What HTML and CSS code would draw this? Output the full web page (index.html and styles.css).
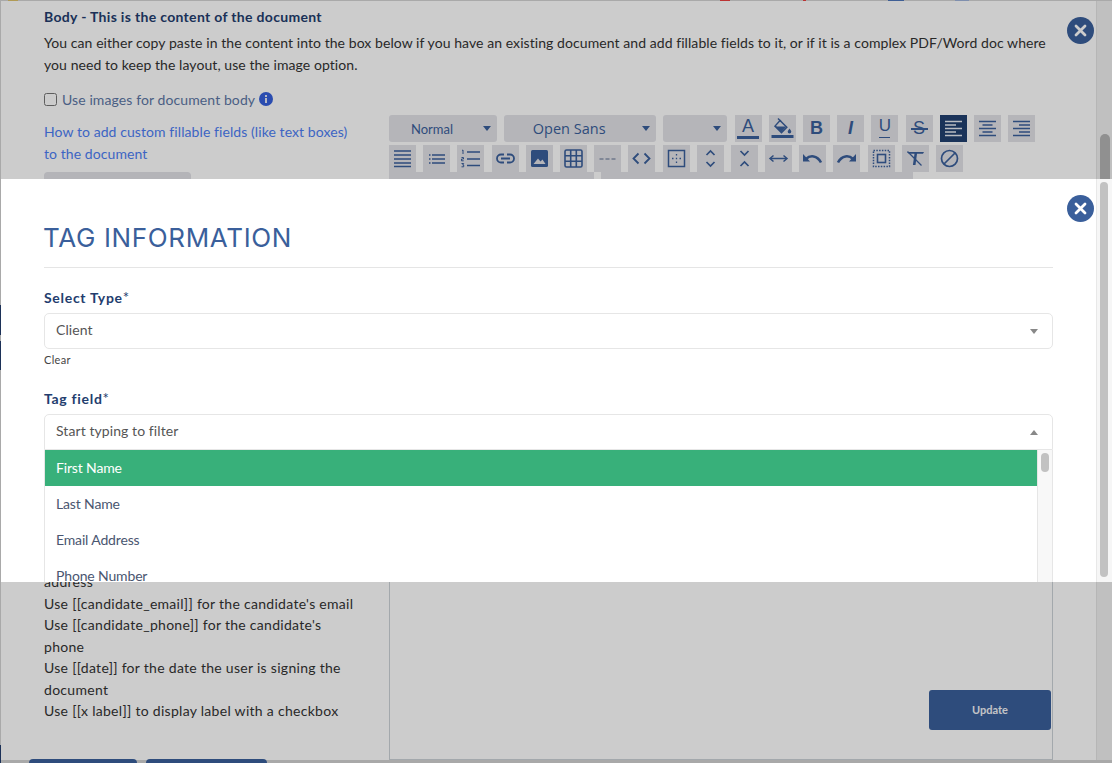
FILE: index.html
```html
<!DOCTYPE html>
<html lang="en">
<head>
<meta charset="utf-8">
<title>Tag information</title>
<link rel="stylesheet" href="styles.css">
</head>
<body>
<div class="page">
  <div class="edge-top"><i class="frag f-a"></i><i class="frag f-b"></i><i class="frag f-c"></i><i class="frag f-d"></i><i class="frag f-e"></i></div>
  <div class="edge-left"><i class="seg s-a"></i><i class="seg s-b"></i><i class="seg s-c"></i></div>

  <section class="doc">
    <div class="doc-main">
      <h3 class="doc-title">Body - This is the content of the document</h3>
      <p class="doc-desc">You can either copy paste in the content into the box below if you have an existing document and add fillable fields to it, or if it is a complex PDF/Word doc where you need to keep the layout, use the image option.</p>
      <label class="use-images"><input type="checkbox" class="check"><span>Use images for document body</span>
        <svg class="info" viewBox="0 0 14 14"><circle cx="7" cy="7" r="7" fill="#3560dc"/><rect x="6" y="6" width="2" height="5" fill="#e4e8f5"/><rect x="6" y="3" width="2" height="2" fill="#e4e8f5"/></svg>
      </label>
      <div class="columns">
        <div class="col-left">
          <a class="how-to">How to add custom fillable fields (like text boxes) to the document</a>
          <div class="grey-btn"></div>
          <div class="help">
            <p>address</p>
            <p>Use [[candidate_email]] for the candidate's email</p>
            <p>Use [[candidate_phone]] for the candidate's phone</p>
            <p>Use [[date]] for the date the user is signing the document</p>
            <p>Use [[x label]] to display label with a checkbox</p>
          </div>
        </div>
        <div class="col-right">
          <div class="tb-row">
            <div class="tb-select w-normal"><span>Normal</span><i class="caret"></i></div>
            <div class="tb-select w-font"><span class="font-name">Open Sans</span><i class="caret"></i></div>
            <div class="tb-select w-size"><i class="caret"></i></div>
            <div class="tb-btn"><span class="ic-a">A</span><i class="ic-bar"></i></div>
            <div class="tb-btn"><svg viewBox="0 0 27 27"><path d="M11 5.500l6.800 6.800-5.300 5.300-6.500-6.500z" fill="none" stroke="#3a5f9b" stroke-width="1.500"/><path d="M6.500 11.500h11l-5 5.500z" fill="#3a5f9b"/><path d="M9 3.500l3 3" stroke="#3a5f9b" stroke-width="1.500"/><path d="M20.500 13.500c1.300 1.800 1.800 2.500 1.800 3.200a1.800 1.800 0 0 1-3.600 0c0-.7.5-1.400 1.800-3.200z" fill="#3a5f9b"/><rect x="2.500" y="20" width="22" height="3" fill="#3a5f9b"/></svg></div>
            <div class="tb-btn"><span class="ic-b">B</span></div>
            <div class="tb-btn"><span class="ic-i">I</span></div>
            <div class="tb-btn"><span class="ic-u">U</span><i class="ic-under"></i></div>
            <div class="tb-btn"><span class="ic-s">S</span><i class="ic-strike"></i></div>
            <div class="tb-btn is-active"><svg viewBox="0 0 27 27"><path d="M5 6.500h17M5 10h11M5 13.500h17M5 17h11M5 20.500h17" stroke="#e8ebf2" stroke-width="1.500"/></svg></div>
            <div class="tb-btn"><svg viewBox="0 0 27 27"><path d="M5 6.500h17M8.500 10h10M5 13.500h17M8.500 17h10M5 20.500h17" stroke="#3a5f9b" stroke-width="1.300"/></svg></div>
            <div class="tb-btn"><svg viewBox="0 0 27 27"><path d="M5 6.500h17M11 10h11M5 13.500h17M11 17h11M5 20.500h17" stroke="#3a5f9b" stroke-width="1.300"/></svg></div>
          </div>
          <div class="tb-row">
            <div class="tb-btn"><svg viewBox="0 0 27 27"><path d="M5 6h17M5 10h17M5 14h17M5 18h17M5 21.500h17" stroke="#3a5f9b" stroke-width="1.500"/></svg></div>
            <div class="tb-btn"><svg viewBox="0 0 27 27"><path d="M9 10h13M9 14h13M9 18h13" stroke="#3a5f9b" stroke-width="1.600"/><path d="M6 10h1.500M6 14h1.500M6 18h1.500" stroke="#3a5f9b" stroke-width="1.600"/></svg></div>
            <div class="tb-btn"><svg viewBox="0 0 27 27"><path d="M10 7h13M10 14h13M10 20.500h13" stroke="#3a5f9b" stroke-width="1.600"/><path d="M5 5.500l1-.5v4M4.500 12.500h2v1.500h-2v1.800h2.200M4.500 18.500h2.200l-1 1.500h1v1.800H4.500" fill="none" stroke="#3a5f9b"/></svg></div>
            <div class="tb-btn"><svg viewBox="0 0 27 27"><path d="M12 9.500H9a4 4 0 0 0 0 8h3M15 9.500h3a4 4 0 0 1 0 8h-3M9 13.500h9" fill="none" stroke="#3a5f9b" stroke-width="1.800"/></svg></div>
            <div class="tb-btn"><svg viewBox="0 0 27 27"><rect x="5" y="5" width="17" height="17" rx="1.500" fill="#3a5f9b"/><path d="M7.500 19l4.500-5.500 2.500 3 2-2 3 4.500z" fill="#e3e3e8"/></svg></div>
            <div class="tb-btn"><svg viewBox="0 0 27 27"><rect x="5" y="5" width="17" height="17" rx="1.500" fill="none" stroke="#3a5f9b" stroke-width="1.600"/><path d="M5 10.700h17M5 16.300h17M10.700 5v17M16.300 5v17" stroke="#3a5f9b" stroke-width="1.600"/></svg></div>
            <div class="tb-btn"><svg viewBox="0 0 27 27"><path d="M5.500 14h4M11.500 14h4M17.500 14h4" stroke="#8a96ad" stroke-width="1.300"/></svg></div>
            <div class="tb-btn"><svg viewBox="0 0 27 27"><path d="M10.500 8.500l-5 5 5 5M16.500 8.500l5 5-5 5" fill="none" stroke="#3a5f9b" stroke-width="1.800"/></svg></div>
            <div class="tb-btn"><svg viewBox="0 0 27 27"><rect x="5.500" y="5.500" width="16" height="16" fill="none" stroke="#3a5f9b" stroke-width="1.500"/><path d="M13.500 9v1.500M13.500 12.700v1.500M13.500 16.500V18M9 13.500h1.500M16.500 13.500H18" stroke="#3a5f9b" stroke-width="1.300"/></svg></div>
            <div class="tb-btn"><svg viewBox="0 0 27 27"><path d="M9.500 10l4-4 4 4M9.500 17l4 4 4-4" fill="none" stroke="#3a5f9b" stroke-width="1.700"/></svg></div>
            <div class="tb-btn"><svg viewBox="0 0 27 27"><path d="M9.500 6l4 4 4-4M9.500 21l4-4 4 4" fill="none" stroke="#3a5f9b" stroke-width="1.700"/></svg></div>
            <div class="tb-btn"><svg viewBox="0 0 27 27"><path d="M6 13.500h15" stroke="#3a5f9b" stroke-width="1.500"/><path d="M8.500 10.500l-3.500 3 3.500 3M18.500 10.500l3.500 3-3.500 3" fill="none" stroke="#3a5f9b" stroke-width="1.500"/></svg></div>
            <div class="tb-btn"><svg viewBox="0 0 27 27"><path d="M4 9v7.500h7z" fill="#3a5f9b"/><path d="M7 14c4-4 11-4 15 3.500" fill="none" stroke="#3a5f9b" stroke-width="2.600"/></svg></div>
            <div class="tb-btn"><svg viewBox="0 0 27 27"><path d="M23 9v7.500h-7z" fill="#3a5f9b"/><path d="M20 14c-4-4-11-4-15 3.500" fill="none" stroke="#3a5f9b" stroke-width="2.600"/></svg></div>
            <div class="tb-btn"><svg viewBox="0 0 27 27"><rect x="5.500" y="5.500" width="16" height="16" fill="none" stroke="#3a5f9b" stroke-width="1.500" stroke-dasharray="1.500 1.300"/><rect x="9.500" y="9.500" width="8" height="8" fill="none" stroke="#3a5f9b" stroke-width="1.600"/></svg></div>
            <div class="tb-btn"><svg viewBox="0 0 27 27"><path d="M5 7h17l-1 1.800h-6L13.500 20h-2.600l1.600-11.200H7z" fill="#3a5f9b"/><path d="M5.500 6.500l14 14" stroke="#3a5f9b" stroke-width="1.300"/></svg></div>
            <div class="tb-btn"><svg viewBox="0 0 27 27"><circle cx="13.500" cy="13.500" r="8" fill="none" stroke="#3a5f9b" stroke-width="1.700"/><path d="M8 19L19 8" stroke="#3a5f9b" stroke-width="1.700"/></svg></div>
          </div>
          <div class="tb-under"><i class="under-a"></i><i class="under-b"></i></div>
          <div class="editor"><button class="update">Update</button></div>
        </div>
      </div>
      <div class="doc-actions"><span class="action a1"></span><span class="action a2"></span></div>
    </div>
    <div class="doc-scroll"><i class="doc-thumb"></i></div>
    <button class="close close-back" aria-label="Close"><svg viewBox="0 0 27 27"><circle cx="13.500" cy="13.500" r="13.500" fill="#3a5f9b"/><path d="M9 9l9 9M18 9l-9 9" stroke="#fff" stroke-width="2.800" stroke-linecap="round"/></svg></button>
  </section>

  <div class="dim"></div>

  <section class="modal">
    <div class="modal-main">
      <h2 class="modal-title">TAG INFORMATION</h2>
      <hr class="rule">
      <label class="field-label first">Select Type<span class="star">*</span></label>
      <div class="select"><span>Client</span><i class="arrow down"></i></div>
      <div class="clear">Clear</div>
      <label class="field-label second">Tag field<span class="star">*</span></label>
      <div class="select open"><span>Start typing to filter</span><i class="arrow up"></i></div>
      <div class="dropdown">
        <ul class="options">
          <li class="is-hover">First Name</li>
          <li>Last Name</li>
          <li>Email Address</li>
          <li>Phone Number</li>
        </ul>
        <div class="drop-scroll"><i class="drop-thumb"></i></div>
      </div>
    </div>
    <div class="modal-scroll"><i class="modal-thumb"></i></div>
    <button class="close close-front" aria-label="Close"><svg viewBox="0 0 27 27"><circle cx="13.500" cy="13.500" r="13.500" fill="#3a5f9b"/><path d="M9 9l9 9M18 9l-9 9" stroke="#fff" stroke-width="2.800" stroke-linecap="round"/></svg></button>
  </section>
</div>
</body>
</html>
```
FILE: styles.css
```css
* { box-sizing: border-box; }
html, body { margin: 0; padding: 0; }
body { font-family: "Lato", "Liberation Sans", sans-serif; font-size: 14px; color: #333; }
.page { position: relative; width: 1112px; height: 763px; overflow: hidden; background: #d4d4d4; padding: 1px 0 3px 1px; }

.edge-top { position: absolute; top: 0; left: 0; right: 0; height: 1px; z-index: 5; }
.frag { position: absolute; top: 0; height: 1px; }
.f-a { left: 8px; width: 10px; background: #b09a55; }
.f-b { left: 720px; width: 10px; background: #b33; }
.f-c { left: 803px; width: 3px; background: #b33; }
.f-d { left: 888px; width: 16px; background: #3f5f95; }
.f-e { left: 955px; width: 14px; background: #7f8fae; }
.edge-left { position: absolute; top: 0; left: 0; width: 1px; height: 100%; z-index: 5; }
.seg { position: absolute; left: 0; width: 1px; background: #1c3158; }
.s-a { top: 305px; height: 30px; }
.s-b { top: 341px; height: 29px; }
.s-c { top: 745px; height: 18px; }

.doc { position: relative; display: flex; height: 100%; background: #fff; }
.doc-main { flex: 1; min-width: 0; padding: 8px 43px 0 43px; display: flex; flex-direction: column; position: relative; }
.doc-title { margin: 0; font-size: 14px; line-height: 16px; font-weight: 700; color: #233d6e; letter-spacing: .32px; }
.doc-desc { margin: 7px 0 0; line-height: 21.500px; color: #333; width: 1016px; letter-spacing: .07px; }
.use-images { display: flex; align-items: center; margin-top: 16px; height: 16px; color: #5d77a6; letter-spacing: .1px; }
.check { width: 13px; height: 13px; margin: 0 5px 0 0; }
.info { width: 14px; height: 14px; margin-left: 4px; }
.columns { display: flex; flex: 1; min-height: 0; margin-top: 8px; gap: 27px; }
.col-left { width: 318px; padding-top: 6px; flex: none; }
.how-to { display: block; color: #4d7ef5; line-height: 22px; letter-spacing: .08px; }
.grey-btn { width: 147px; height: 40px; margin-top: 7px; background: #e1e1e6; border-radius: 4px; }
.help { margin-top: 359.300px; letter-spacing: .29px; }
.help p { margin: 0; line-height: 21.500px; color: #333; }

.col-right { flex: 1; min-width: 0; display: flex; flex-direction: column; }
.tb-row { display: flex; gap: 7.200px; height: 27px; margin-bottom: 3px; flex: none; }
.tb-select { position: relative; height: 27px; background: #e3e3e8; border-radius: 3px; color: #3a5f9b; display: flex; align-items: center; justify-content: center; padding-right: 22px; font-size: 13px; flex: none; }
.font-name { font-family: "Open Sans", sans-serif; font-size: 14.500px; }
.w-normal { width: 108px; }
.w-font { width: 152px; }
.w-size { width: 64px; }
.caret { position: absolute; top: 11px; right: 6px; border: 4px solid transparent; border-top: 5px solid #3a5f9b; border-bottom: 0; width: 0; height: 0; }
.tb-btn { position: relative; width: 27px; height: 27px; background: #e3e3e8; flex: none; display: flex; align-items: center; justify-content: center; color: #3a5f9b; font-family: "Liberation Sans", sans-serif; }
.tb-btn svg { width: 27px; height: 27px; display: block; }
.is-active { background: #214070; }
.ic-a { font-size: 18px; line-height: 18px; margin-top: -6px; }
.ic-bar { position: absolute; left: 2px; right: 3px; bottom: 3px; height: 3px; background: #3a5f9b; }
.ic-b { font-size: 18px; font-weight: 700; }
.ic-i { font-size: 18px; font-weight: 700; font-style: italic; }
.ic-u { font-size: 17px; margin-top: -5px; }
.ic-under { position: absolute; left: 8px; right: 8px; bottom: 4px; height: 1.500px; background: #3a5f9b; }
.ic-s { font-size: 18px; }
.ic-strike { position: absolute; left: 5px; right: 5px; top: 13px; height: 1.500px; background: #3a5f9b; }
.tb-under { display: flex; gap: 7px; height: 40px; flex: none; margin-top: -3px; }
.under-a { width: 205px; background: #e3e3e8; }
.under-b { width: 312px; background: #e3e3e8; }
.editor { flex: 1; border: 1px solid #ccd2d8; display: flex; justify-content: flex-end; align-items: flex-end; padding: 0 1px 29px 0; min-height: 0; }
.update { width: 122px; height: 40px; padding: 0 0 2px; background: #3a5f9b; color: #f4f5f8; border: 0; border-radius: 3px; font: 700 11px "Lato", sans-serif; }
.doc-actions { position: absolute; left: 28px; bottom: -3px; display: flex; gap: 9px; }
.action { display: block; height: 4px; background: #3a5f9b; border-radius: 5px 5px 0 0; }
.a1 { width: 108px; }
.a2 { width: 121px; }

.doc-scroll { width: 16px; flex: none; border-left: 1px solid #e4e4e4; background: #f0f0f0; position: relative; }
.doc-thumb { position: absolute; left: 3px; top: 133px; width: 10px; height: 300px; border-radius: 5px; background: #b4b4b4; }
.close { position: absolute; width: 27px; height: 27px; padding: 0; border: 0; background: none; }
.close svg { display: block; width: 27px; height: 27px; }
.close-back { left: 1066px; top: 16px; }

.dim { position: absolute; inset: 0; background: rgba(0, 0, 0, .2); }

.modal { position: absolute; left: 1px; right: 0; top: 179px; height: 403px; background: #fff; display: flex; overflow: hidden; }
.modal-main { flex: 1; min-width: 0; padding: 44px 43px 0 43px; }
.modal-title { margin: 0 0 0 -1px; font: 400 26px/30px "Inter", sans-serif; color: #3a5f9b; letter-spacing: .65px; }
.rule { margin: 14px 0 0; border: 0; border-top: 1px solid #e5e5e5; }
.field-label { display: block; font-weight: 700; color: #233d6e; line-height: 18px; letter-spacing: .7px; }
.star { font-weight: 400; font-size: 15px; }
.first { margin-top: 20px; }
.second { margin-top: 22px; }
.select { position: relative; height: 36px; margin-top: 6px; border: 1px solid #e6e6e6; border-radius: 5px; padding: 0 0 3px 11px; display: flex; align-items: center; color: #555; letter-spacing: .08px; }
.select.open { border-radius: 5px 5px 0 0; }
.arrow { position: absolute; right: 14px; top: 15px; width: 0; height: 0; border: 4px solid transparent; }
.down { border-top: 5px solid #888; border-bottom: 0; }
.up { border-bottom: 5px solid #888; border-top: 0; }
.clear { font-size: 11px; line-height: 14px; margin-top: 4px; color: #444; letter-spacing: .3px; }
.dropdown { display: flex; border: 1px solid #e6e6e6; border-width: 0 1px; height: 140px; }
.options { list-style: none; margin: 0; padding: 0; flex: 1; min-width: 0; letter-spacing: -.15px; }
.options li { height: 36px; padding: 0 0 2px 11px; display: flex; align-items: center; color: #4a5670; }
.options .is-hover { background: #38b07a; color: #fff; }
.drop-scroll { width: 15px; flex: none; background: #f8f8f8; border-left: 1px solid #e6e6e6; position: relative; }
.drop-thumb { position: absolute; left: 3px; top: 3px; width: 8px; height: 19px; border-radius: 4px; background: #c2c2c2; }
.modal-scroll { width: 16px; flex: none; background: #f6f6f6; border-left: 1px solid #e8e8e8; position: relative; }
.modal-thumb { position: absolute; left: 3px; top: 3px; width: 8px; height: 395px; border-radius: 4px; background: #c2c2c2; }
.close-front { left: 1066px; top: 16px; }
```
